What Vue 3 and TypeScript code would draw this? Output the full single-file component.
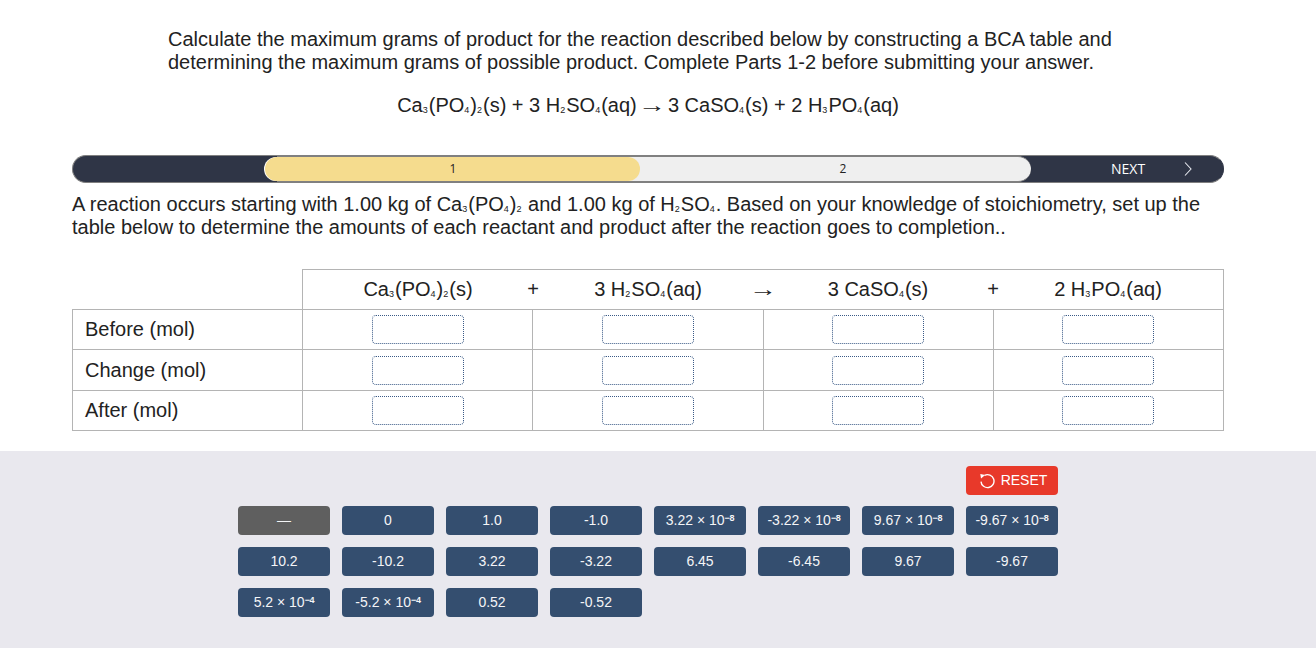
<script setup lang="ts">
interface Cell { text: string; sup?: string }
const rows: string[] = ['Before (mol)', 'Change (mol)', 'After (mol)']
const keypad: Cell[] = [
  { text: '—' }, { text: '0' }, { text: '1.0' }, { text: '-1.0' },
  { text: '3.22 × 10', sup: '−8' }, { text: '-3.22 × 10', sup: '−8' }, { text: '9.67 × 10', sup: '−8' }, { text: '-9.67 × 10', sup: '−8' },
  { text: '10.2' }, { text: '-10.2' }, { text: '3.22' }, { text: '-3.22' },
  { text: '6.45' }, { text: '-6.45' }, { text: '9.67' }, { text: '-9.67' },
  { text: '5.2 × 10', sup: '−4' }, { text: '-5.2 × 10', sup: '−4' }, { text: '0.52' }, { text: '-0.52' },
]
</script>

<template>
  <div class="page">
    <section class="intro">
      <p>Calculate the maximum grams of product for the reaction described below by constructing a BCA table and determining the maximum grams of possible product. Complete Parts 1-2 before submitting your answer.</p>
      <p class="equation">Ca<sub>3</sub>(PO<sub>4</sub>)<sub>2</sub>(s) + 3 H<sub>2</sub>SO<sub>4</sub>(aq)<span class="arrow">→</span>3 CaSO<sub>4</sub>(s) + 2 H<sub>3</sub>PO<sub>4</sub>(aq)</p>
    </section>

    <section class="main">
      <nav class="bar">
        <div class="step active">1</div>
        <div class="step rest">2</div>
        <div class="next">
          <span>NEXT</span>
          <svg width="10" height="16" viewBox="0 0 10 16" fill="none" stroke="#e6e8ee" stroke-width="1.1"><path d="M2 1.5 8 8l-6 6.5" /></svg>
        </div>
      </nav>

      <div class="question">
        <p>A reaction occurs starting with 1.00 kg of Ca<sub>3</sub>(PO<sub>4</sub>)<sub>2</sub> and 1.00 kg of H<sub>2</sub>SO<sub>4</sub>. Based on your knowledge of stoichiometry, set up the</p>
        <p>table below to determine the amounts of each reactant and product after the reaction goes to completion..</p>
      </div>

      <table class="bca">
        <colgroup>
          <col class="c0" /><col class="c1" /><col class="c2" /><col class="c1" /><col class="c1" />
        </colgroup>
        <thead>
          <tr>
            <th class="blank"></th>
            <th colspan="4" class="reaction">
              <div class="terms">
                <span class="t1">Ca<sub>3</sub>(PO<sub>4</sub>)<sub>2</sub>(s)</span>
                <span class="t2">+</span>
                <span class="t3">3 H<sub>2</sub>SO<sub>4</sub>(aq)</span>
                <span class="t4"><span class="arrow">→</span></span>
                <span class="t5">3 CaSO<sub>4</sub>(s)</span>
                <span class="t6">+</span>
                <span class="t7">2 H<sub>3</sub>PO<sub>4</sub>(aq)</span>
              </div>
            </th>
          </tr>
        </thead>
        <tbody>
          <tr v-for="(r, i) in rows" :key="r" :class="'row' + i">
            <td class="label">{{ r }}</td>
            <td v-for="n in 4" :key="n" class="slot"><div class="drop"></div></td>
          </tr>
        </tbody>
      </table>
    </section>

    <section class="tray">
      <div class="tray-grid">
        <button class="key reset" type="button">
          <svg width="15" height="16" viewBox="0 0 15 16" fill="none" stroke="#fff" stroke-width="1.4">
            <path d="M4.6 2.3A6.5 6.5 0 1 1 1 8.6" />
            <path d="M.3 1 5.2 1.9 1 5.6z" fill="#fff" stroke="none" />
          </svg>
          RESET
        </button>
        <button
          v-for="(k, i) in keypad"
          :key="k.text + i"
          class="key"
          :class="{ blank: i === 0 }"
          type="button"
        >{{ k.text }}<sup v-if="k.sup">{{ k.sup }}</sup></button>
      </div>
    </section>
  </div>
</template>

<style>
html, body { margin: 0; background: #fff; }
</style>

<style scoped>
.page {
  width: 1316px;
  height: 648px;
  overflow: hidden;
  display: flex;
  flex-direction: column;
  font-family: "Liberation Sans", Arial, sans-serif;
  color: #222;
  font-size: 20px;
  line-height: 23px;
}
p { margin: 0; }
sub { font-size: 9px; line-height: 0; vertical-align: -1px; letter-spacing: 1px; }
sup { font-size: 9px; font-weight: 700; line-height: 0; vertical-align: 4px; letter-spacing: -.3px; }
.arrow { display: inline-block; transform: scaleX(1.4); }
.intro { padding: 28px 168px 0; height: 155px; box-sizing: border-box; }
.equation { margin-top: 20px; padding-right: 20px; text-align: center; }
.equation .arrow { margin: 0 5.6px; }
.main { padding: 0 92px 0 72px; height: 296px; box-sizing: border-box; }
.bar {
  height: 28px;
  box-sizing: border-box;
  background: #2f3546;
  border: 1px solid #808080;
  border-right-color: #2f3546;
  border-radius: 14px;
  display: flex;
  padding-left: 192px;
  overflow: hidden;
  font-family: "Open Sans", "Noto Sans", sans-serif;
  font-size: 12px;
  line-height: 24px;
  color: #222;
}
.step { text-align: center; box-sizing: border-box; }
.active {
  width: 375px;
  height: 24px;
  margin-top: 1px;
  padding-left: 1px;
  background: #f5dc8e;
  border-radius: 12px;
  position: relative;
  z-index: 2;
  box-shadow: -1px 0 0 #fff;
}
.rest {
  width: 754px;
  height: 26px;
  flex: none;
  margin-left: -363px;
  padding-left: 378px;
  background: #efefef;
  border-top: 1px solid #808080;
  border-bottom: 1px solid #808080;
  border-radius: 0 13px 13px 0;
}
.next {
  flex: 1;
  display: flex;
  align-items: center;
  color: #fff;
  font-size: 14px;
  padding-left: 80px;
  gap: 38px;
}
.question { margin-top: 10px; }
.bca {
  margin-top: 30px;
  width: 1152px;
  table-layout: fixed;
  border-collapse: collapse;
  font-size: 20px;
}
.c0, .c1 { width: 230px; }
.c2 { width: 231px; }
th, td { border: 1px solid #b4b4b4; padding: 0; font-weight: 400; }
.blank { border-left: 0; border-top: 0; }
thead tr { height: 40px; }
.terms {
  display: grid;
  grid-template-columns: repeat(8, 115px);
  text-align: center;
  line-height: 23px;
}
.terms > span { grid-row: 1; }
.t1 { grid-column: 1 / 3; }
.t2 { grid-column: 2 / 4; }
.t3 { grid-column: 3 / 5; }
.t4 { grid-column: 4 / 6; }
.t5 { grid-column: 5 / 7; }
.t6 { grid-column: 6 / 8; }
.t7 { grid-column: 7 / 9; }
.row0 { height: 40px; }
.row1 { height: 41px; }
.row2 { height: 40px; }
.label { padding-left: 12px; }
.slot:nth-child(n+4) { padding-right: 1px; }
.drop {
  width: 92px;
  height: 29px;
  box-sizing: border-box;
  margin: 0 auto;
  border: 1px dotted #3a5a86;
  border-radius: 4px;
}
.tray {
  flex: 1;
  background: #e9e8ee;
  padding: 15px 258px 0 238px;
}
.tray-grid {
  display: grid;
  grid-template-columns: repeat(8, 92px);
  grid-template-rows: 28px repeat(3, 29px);
  column-gap: 12px;
  row-gap: 12px;
}
.key {
  border: 0;
  padding: 0;
  margin: 0;
  border-radius: 4px;
  background: #344e6f;
  color: #f4f5f7;
  font-family: "Liberation Sans", Arial, sans-serif;
  font-size: 14px;
  line-height: 29px;
  white-space: nowrap;
  text-align: center;
}
.key.blank { background: #5f5f5f; }
.reset {
  grid-column: 8;
  height: 29px;
  padding-left: 3px;
  background: #e8392a;
  color: #fff;
  display: flex;
  align-items: center;
  justify-content: center;
  gap: 6px;
}
</style>
